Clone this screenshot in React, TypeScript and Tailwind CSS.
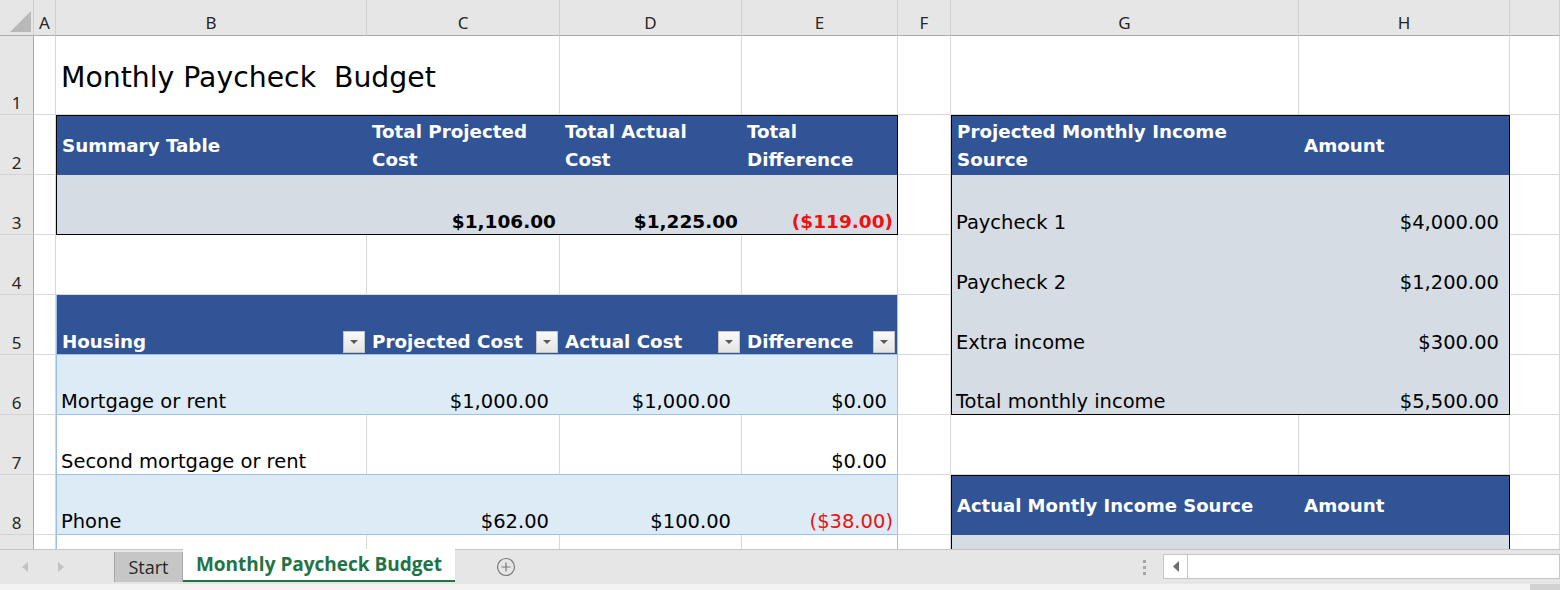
import React from "react";

const COLS = ["A", "B", "C", "D", "E", "F", "G", "H", ""];

// which sheet cells are taken by one of the tables / the title
const covered = (r: number, c: number) =>
  (r === 1 && c >= 2 && c <= 3) ||
  (r >= 2 && r <= 3 && c >= 2 && c <= 5) ||
  (r >= 2 && r <= 6 && c >= 7 && c <= 8) ||
  (r >= 5 && c >= 2 && c <= 5) ||
  (r >= 8 && c >= 7 && c <= 8);

const housing = [
  { label: "Mortgage or rent", proj: "$1,000.00", act: "$1,000.00", diff: "$0.00", neg: false, band: true },
  { label: "Second mortgage or rent", proj: "", act: "", diff: "$0.00", neg: false, band: false },
  { label: "Phone", proj: "$62.00", act: "$100.00", diff: "($38.00)", neg: true, band: true },
  { label: "", proj: "", act: "", diff: "", neg: false, band: false },
];

const income = [
  { label: "Paycheck 1", amount: "$4,000.00" },
  { label: "Paycheck 2", amount: "$1,200.00" },
  { label: "Extra income", amount: "$300.00" },
  { label: "Total monthly income", amount: "$5,500.00" },
];

function FilterBtn() {
  return (
    <span className="flex h-[22px] w-[22px] shrink-0 items-center justify-center border border-[#c3c3c3] bg-gradient-to-b from-[#fafafa] to-[#e4e4e4]">
      <svg width="8" height="4" viewBox="0 0 8 4">
        <path d="M0 0h8L4 4z" fill="#5a5a5a" />
      </svg>
    </span>
  );
}

function Sheet() {
  const cells: React.ReactNode[] = [];

  cells.push(
    <div key="corner" className="flex items-end justify-end border-r border-b border-r-[#cfcfcf] border-b-[#ababab] bg-[#e6e6e6]">
      <svg width="33" height="35" viewBox="0 0 33 35">
        <path d="M10 32H31V11Z" fill="#b9b9b9" />
      </svg>
    </div>
  );
  COLS.forEach((l, i) =>
    cells.push(
      <div
        key={"h" + i}
        className="flex items-end justify-center border-r border-b border-r-[#d0d0d0] border-b-[#ababab] bg-[#e6e6e6] pb-[2px] text-[17px] leading-[20px] text-[#262626]"
      >
        {l}
      </div>
    )
  );

  for (let r = 1; r <= 9; r++) {
    cells.push(
      <div
        key={"r" + r}
        className="flex items-end justify-center border-r border-b border-r-[#ababab] border-b-[#d4d4d4] bg-[#e6e6e6] pb-px text-[17px] leading-[20px] text-[#262626]"
      >
        {/* row 9 is cut off by the tab bar, its number is not visible */}
        {r < 9 ? r : ""}
      </div>
    );
    for (let c = 1; c <= 9; c++) {
      if (!covered(r, c)) {
        cells.push(<div key={r + "-" + c} className="border-r border-b border-[#d9d9d9]" />);
      }
    }
  }

  return (
    <div className="grid h-[549px] grid-cols-[34px_22px_311px_193px_182px_156px_53px_348px_211px_1fr] grid-rows-[36px_79px_repeat(8,60px)] overflow-hidden">
      {cells}

      {/* title */}
      <div className="col-start-3 col-span-2 row-start-2 flex items-end border-r border-b border-[#d9d9d9] pb-[19px] pl-[5px] font-['DejaVu_Sans',sans-serif] text-[28.3px] leading-[34px] whitespace-pre text-black">
        {"Monthly Paycheck  Budget"}
      </div>

      {/* summary table */}
      <div className="col-start-3 col-span-4 row-start-3 row-span-2 grid grid-cols-[310px_193px_182px_1fr] grid-rows-[59px_59px] border border-black font-['DejaVu_Sans',sans-serif]">
        <div className="flex items-center bg-[#305496] pl-[5px] text-[18.3px] font-bold leading-[28px] text-white">Summary Table</div>
        <div className="flex items-center bg-[#305496] pl-[5px] text-[18.3px] font-bold leading-[28px] text-white">
          <span>Total Projected<br />Cost</span>
        </div>
        <div className="flex items-center bg-[#305496] pl-[5px] text-[18.3px] font-bold leading-[28px] text-white">
          <span>Total Actual<br />Cost</span>
        </div>
        <div className="flex items-center bg-[#305496] pl-[5px] text-[18.3px] font-bold leading-[28px] text-white">
          <span>Total<br />Difference</span>
        </div>
        <div className="bg-[#d6dce4]" />
        <div className="flex items-end justify-end bg-[#d6dce4] pr-[4px] pb-px text-[18.5px] font-bold leading-[23px] text-black">$1,106.00</div>
        <div className="flex items-end justify-end bg-[#d6dce4] pr-[4px] pb-px text-[18.5px] font-bold leading-[23px] text-black">$1,225.00</div>
        <div className="flex items-end justify-end bg-[#d6dce4] pr-[4px] pb-px text-[18.5px] font-bold leading-[23px] text-[#ee1111]">($119.00)</div>
      </div>

      {/* housing table */}
      <div className="col-start-3 col-span-4 row-start-6 row-span-5 flex flex-col border-x border-[#9bc2e6] font-['DejaVu_Sans',sans-serif]">
        <div className="grid h-[60px] shrink-0 grid-cols-[310px_193px_182px_1fr] border-b border-[#9bc2e6] bg-[#305496] text-[18.3px] font-bold leading-[23px] text-white">
          {["Housing", "Projected Cost", "Actual Cost", "Difference"].map((h) => (
            <div key={h} className="flex items-end justify-between pr-[2px] pb-px pl-[5px]">
              <span>{h}</span>
              <FilterBtn />
            </div>
          ))}
        </div>
        {housing.map((row, i) => (
          <div
            key={i}
            className={
              row.band
                ? "grid h-[60px] shrink-0 grid-cols-[310px_193px_182px_1fr] border-b border-[#9bc2e6] bg-[#ddebf7] text-[19.5px] leading-[23px] text-black"
                : "grid h-[60px] shrink-0 grid-cols-[310px_193px_182px_1fr] border-b border-[#9bc2e6] bg-white text-[19.5px] leading-[23px] text-black"
            }
          >
            <div className={row.band ? "flex items-end border-r border-transparent pb-px pl-[4px]" : "flex items-end border-r border-[#d9d9d9] pb-px pl-[4px]"}>
              {row.label}
            </div>
            <div className={row.band ? "flex items-end justify-end border-r border-transparent pr-[10px] pb-px" : "flex items-end justify-end border-r border-[#d9d9d9] pr-[10px] pb-px"}>
              {row.proj}
            </div>
            <div className={row.band ? "flex items-end justify-end border-r border-transparent pr-[10px] pb-px" : "flex items-end justify-end border-r border-[#d9d9d9] pr-[10px] pb-px"}>
              {row.act}
            </div>
            <div className={row.neg ? "flex items-end justify-end pr-[4px] pb-px text-[#ee1111]" : "flex items-end justify-end pr-[10px] pb-px"}>
              {row.diff}
            </div>
          </div>
        ))}
      </div>

      {/* projected income table */}
      <div className="col-start-8 col-span-2 row-start-3 row-span-5 grid grid-cols-[347px_1fr] grid-rows-[59px_60px_60px_60px_59px] border border-black font-['DejaVu_Sans',sans-serif]">
        <div className="flex items-center bg-[#305496] pl-[5px] text-[18.3px] font-bold leading-[28px] text-white">
          <span>Projected Monthly Income<br />Source</span>
        </div>
        <div className="flex items-center bg-[#305496] pl-[5px] text-[18.3px] font-bold leading-[28px] text-white">Amount</div>
        {income.map((row) => (
          <React.Fragment key={row.label}>
            <div className="flex items-end bg-[#d6dce4] pb-px pl-[4px] text-[19.5px] leading-[23px] text-black">{row.label}</div>
            <div className="flex items-end justify-end bg-[#d6dce4] pr-[10px] pb-px text-[19.5px] leading-[23px] text-black">{row.amount}</div>
          </React.Fragment>
        ))}
      </div>

      {/* actual income table */}
      <div className="col-start-8 col-span-2 row-start-9 row-span-2 grid grid-cols-[347px_1fr] grid-rows-[59px_60px] border-x border-t border-black font-['DejaVu_Sans',sans-serif]">
        <div className="flex items-center bg-[#305496] pl-[5px] text-[18px] font-bold leading-[28px] text-white">Actual Montly Income Source</div>
        <div className="flex items-center bg-[#305496] pl-[5px] text-[18.3px] font-bold leading-[28px] text-white">Amount</div>
        <div className="bg-[#d6dce4]" />
        <div className="bg-[#d6dce4]" />
      </div>
    </div>
  );
}

function TabBar() {
  return (
    <div className="flex h-[35px] border-t border-[#c6c6c6] bg-[#e6e6e6] font-['Open_Sans',sans-serif]">
      <div className="flex w-[114px] shrink-0 items-center">
        <svg className="ml-[22px]" width="6" height="10" viewBox="0 0 6 10">
          <path d="M6 0V10L0 5Z" fill="#c2c2c2" />
        </svg>
        <svg className="ml-[30px]" width="6" height="10" viewBox="0 0 6 10">
          <path d="M0 0V10L6 5Z" fill="#c2c2c2" />
        </svg>
      </div>
      <div className="my-[2px] flex w-[69px] shrink-0 items-center justify-center border-x border-[#a9a9a9] bg-[#c6c6c6] text-[18px] text-[#262626]">
        Start
      </div>
      <div className="-mt-px mb-[2px] flex w-[272px] shrink-0 items-center justify-center border-b-2 border-[#217346] bg-white text-[19px] font-bold text-[#217346]">
        Monthly Paycheck Budget
      </div>
      <div className="ml-[41px] flex items-center">
        <svg width="20" height="20" viewBox="0 0 20 20">
          <circle cx="10" cy="10" r="8.5" fill="none" stroke="#7a7a7a" strokeWidth="1.2" />
          <path d="M10 5.5v9M5.5 10h9" stroke="#7a7a7a" strokeWidth="1.2" />
        </svg>
      </div>
      <div className="mr-[17px] ml-auto flex flex-col items-center justify-center gap-[3px]">
        <span className="h-[3px] w-[3px] bg-[#a6a6a6]" />
        <span className="h-[3px] w-[3px] bg-[#a6a6a6]" />
        <span className="h-[3px] w-[3px] bg-[#a6a6a6]" />
      </div>
      <div className="mt-[4px] flex h-[25px] w-[397px] shrink-0 border border-[#c6c6c6] bg-white">
        <div className="flex w-[24px] items-center justify-center border-r border-[#c6c6c6]">
          <svg width="6" height="11" viewBox="0 0 6 11">
            <path d="M6 0V11L0 5.5Z" fill="#6b6b6b" />
          </svg>
        </div>
      </div>
    </div>
  );
}

export default function App() {
  return (
    <div className="h-[590px] w-[1560px] overflow-hidden bg-white font-['Noto_Sans',sans-serif]">
      <Sheet />
      <TabBar />
      <div className="flex h-[6px] justify-end bg-[#f3f3f3]">
        <div className="w-[30px] bg-[#d2d2d2]" />
      </div>
    </div>
  );
}
